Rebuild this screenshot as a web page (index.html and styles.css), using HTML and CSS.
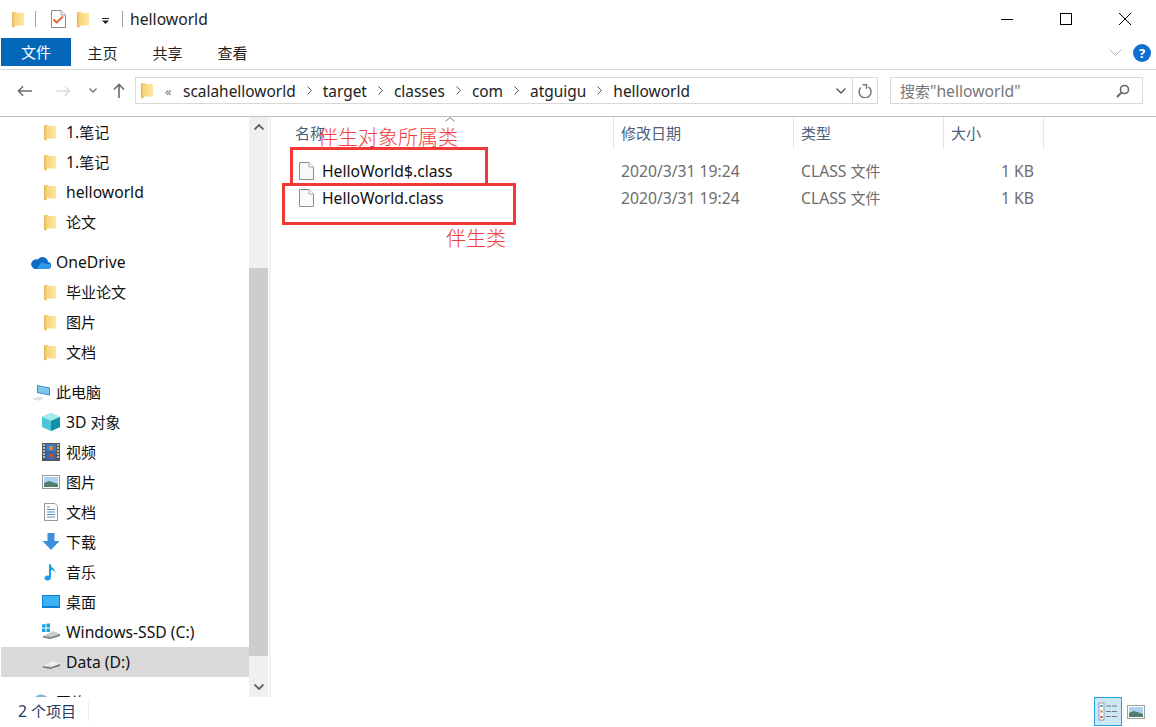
FILE: index.html
```html
<!DOCTYPE html>
<html lang="zh-CN">
<head>
<meta charset="utf-8">
<title>helloworld</title>
<link rel="stylesheet" href="styles.css">
</head>
<body>
<svg class="defs" width="0" height="0" aria-hidden="true">
  <defs>
    <linearGradient id="fg" x1="0" y1="0" x2="1" y2="0">
      <stop offset="0" stop-color="#f6cf6e"/><stop offset="1" stop-color="#ffe6a0"/>
    </linearGradient>
    <symbol id="folder" viewBox="0 0 12 17">
      <path d="M0 1.500L4.500 .5V2H12V14.500H2.500V16.500L0 15.500Z" fill="url(#fg)"/>
      <path d="M0 1.500L1.500 1V16L0 15.500Z" fill="#e4bb5c"/>
      <path d="M2.500 14.500V16.500L1 16V14.500Z" fill="#e0b655"/>
    </symbol>
    <symbol id="file" viewBox="0 0 15 18">
      <path d="M.5.5H10L14.500 5V17.500H.5Z" fill="#f8f9fb" stroke="#8d8d8d"/>
      <path d="M10 .5V5H14.500" fill="#fff" stroke="#a8a8a8"/>
    </symbol>
  </defs>
</svg>
<div class="window">
  <header class="titlebar">
    <svg class="ic-folder qa-1"><use href="#folder"/></svg>
    <span class="qa-sep qa-sep-1"></span>
    <svg class="ic-check" viewBox="0 0 15 18">
      <path d="M.5.5H10L14.500 5V17.500H.5Z" fill="#fff" stroke="#8a8a8a"/>
      <path d="M10 .5V5H14.500" fill="#eee" stroke="#a8a8a8"/>
      <path d="M2.500 9.500L5.500 12.500L12 6.500" fill="none" stroke="#e8602c" stroke-width="1.800"/>
    </svg>
    <svg class="ic-folder qa-2"><use href="#folder"/></svg>
    <svg class="ic-qa-drop" viewBox="0 0 7 6"><path d="M0 0H7V1H0ZM0 2.500H7L3.500 6Z" fill="#222"/></svg>
    <span class="qa-sep qa-sep-2"></span>
    <span class="title-text lat">helloworld</span>
    <div class="win-btns">
      <svg class="win-btn" viewBox="0 0 12 12"><path d="M0 6.500H12" stroke="#000"/></svg>
      <svg class="win-btn" viewBox="0 0 12 12"><rect x=".5" y=".5" width="11" height="11" fill="none" stroke="#000"/></svg>
      <svg class="win-btn" viewBox="0 0 12 12"><path d="M0 0L12 12M12 0L0 12" stroke="#000"/></svg>
    </div>
  </header>

  <nav class="ribbon">
    <span class="tab tab-file">文件</span>
    <span class="tab tab-first">主页</span>
    <span class="tab">共享</span>
    <span class="tab">查看</span>
    <svg class="ribbon-chev" viewBox="0 0 13 7"><path d="M.5.5L6.500 6.500L12.500.5" fill="none" stroke="#b4b4b4"/></svg>
    <span class="help">?</span>
  </nav>

  <div class="addressbar">
    <svg class="nav-ic nav-back" viewBox="0 0 16 12"><path d="M16 6H1.500M6.500 1L1.500 6L6.500 11" fill="none" stroke="#6b6b6b" stroke-width="1.600"/></svg>
    <svg class="nav-ic nav-fwd" viewBox="0 0 16 12"><path d="M0 6H14.500M9.500 1L14.500 6L9.500 11" fill="none" stroke="#dcdcdc" stroke-width="1.600"/></svg>
    <svg class="nav-down" viewBox="0 0 8 5"><path d="M.5.5L4 4L7.500.5" fill="none" stroke="#777" stroke-width="1.400"/></svg>
    <svg class="nav-up" viewBox="0 0 12 15"><path d="M6 15V1.500M1 6.500L6 1.500L11 6.500" fill="none" stroke="#6b6b6b" stroke-width="1.600"/></svg>
    <div class="crumbs">
      <svg class="ic-folder crumb-folder"><use href="#folder"/></svg>
      <span class="crumb-more">«</span>
      <span class="crumb">scalahelloworld</span>
      <svg class="crumb-sep" viewBox="0 0 5 9"><path d="M.5.5L4.500 4.500L.5 8.500" fill="none" stroke="#555"/></svg>
      <span class="crumb">target</span>
      <svg class="crumb-sep" viewBox="0 0 5 9"><path d="M.5.5L4.500 4.500L.5 8.500" fill="none" stroke="#555"/></svg>
      <span class="crumb">classes</span>
      <svg class="crumb-sep" viewBox="0 0 5 9"><path d="M.5.5L4.500 4.500L.5 8.500" fill="none" stroke="#555"/></svg>
      <span class="crumb">com</span>
      <svg class="crumb-sep" viewBox="0 0 5 9"><path d="M.5.5L4.500 4.500L.5 8.500" fill="none" stroke="#555"/></svg>
      <span class="crumb">atguigu</span>
      <svg class="crumb-sep" viewBox="0 0 5 9"><path d="M.5.5L4.500 4.500L.5 8.500" fill="none" stroke="#555"/></svg>
      <span class="crumb">helloworld</span>
      <svg class="crumb-drop" viewBox="0 0 10 6"><path d="M.5.5L5 5L9.500.5" fill="none" stroke="#555" stroke-width="1.300"/></svg>
      <span class="crumb-refresh">
        <svg class="refresh-ic" viewBox="0 0 14 14"><path d="M2.800 3.500A6 6 0 1 0 10.500 2.800M4.500 .8H8.500V4.800" fill="none" stroke="#777" stroke-width="1.500"/></svg>
      </span>
    </div>
    <div class="search">
      <span class="search-text">搜索<span class="lat">"helloworld"</span></span>
      <svg class="search-ic" viewBox="0 0 14 14"><circle cx="8.500" cy="5.500" r="4" fill="none" stroke="#666" stroke-width="1.600"/><path d="M5.500 8.500L1 13" stroke="#666" stroke-width="2"/></svg>
    </div>
  </div>

  <div class="content">
    <aside class="sidebar">
      <ul class="tree">
        <li class="item sub"><svg class="ic-folder"><use href="#folder"/></svg><span><span class="lat">1.</span>笔记</span></li>
        <li class="item sub"><svg class="ic-folder"><use href="#folder"/></svg><span><span class="lat">1.</span>笔记</span></li>
        <li class="item sub"><svg class="ic-folder"><use href="#folder"/></svg><span class="lat">helloworld</span></li>
        <li class="item sub"><svg class="ic-folder"><use href="#folder"/></svg>论文</li>
        <li class="item root gap">
          <svg class="ic-root" viewBox="0 0 20 14"><path d="M3.500 13.500H16.500A3.500 3.500 0 0 0 17 6.500 5.500 5.500 0 0 0 7 4 4.500 4.500 0 0 0 3.500 13.500Z" fill="#0f6cc4"/><path d="M6 13.500H16.500A3.500 3.500 0 0 0 19.500 9L10 7Z" fill="#2e9be6"/></svg><span class="lat">OneDrive</span>
        </li>
        <li class="item sub"><svg class="ic-folder"><use href="#folder"/></svg>毕业论文</li>
        <li class="item sub"><svg class="ic-folder"><use href="#folder"/></svg>图片</li>
        <li class="item sub"><svg class="ic-folder"><use href="#folder"/></svg>文档</li>
        <li class="item root gap">
          <svg class="ic-root" viewBox="0 0 20 17"><path d="M6 1L19 3.500V11.500L6 9Z" fill="#3a8fc8"/><path d="M7 2L18 4.200V10.300L7 8.200Z" fill="#7cc6ea"/><path d="M1 15L7 12.500L14 14L8 16.800Z" fill="#dfe3e6"/></svg>此电脑
        </li>
        <li class="item sub">
          <svg class="ic-sub" viewBox="0 0 18 18"><path d="M9 0L18 4V14L9 18L0 14V4Z" fill="#4cc6d4"/><path d="M9 0L18 4L9 8L0 4Z" fill="#a5ebf0"/><path d="M9 8L18 4V14L9 18Z" fill="#0f8fa8"/></svg><span><span class="lat">3D </span>对象</span>
        </li>
        <li class="item sub">
          <svg class="ic-sub" viewBox="0 0 18 18"><rect width="18" height="18" fill="#555"/><rect x="4" y="1" width="10" height="7.500" fill="#3a7ac8"/><rect x="4" y="9.500" width="10" height="7.500" fill="#3566b5"/><rect x="7" y="3" width="4" height="4" fill="#d08a3a"/><rect x="7" y="11" width="4" height="4" fill="#c0502a"/><path d="M1 2H3M1 5H3M1 8H3M1 11H3M1 14H3M15 2H17M15 5H17M15 8H17M15 11H17M15 14H17" stroke="#ddd" stroke-width="1.500"/></svg>视频
        </li>
        <li class="item sub">
          <svg class="ic-sub" viewBox="0 0 18 18"><rect x=".5" y="2.500" width="17" height="13" fill="#fff" stroke="#999"/><rect x="2" y="4" width="14" height="10" fill="#a9d3ef"/><path d="M2 10L7 8L16 11V14H2Z" fill="#4f7f6e"/></svg>图片
        </li>
        <li class="item sub">
          <svg class="ic-sub" viewBox="0 0 18 18"><path d="M2.500.5H13L15.500 3V17.500H2.500Z" fill="#fff" stroke="#999"/><path d="M5 4H8M5 6.500H13M5 9H13M5 11.500H13M5 14H13" stroke="#5b8fc0"/></svg>文档
        </li>
        <li class="item sub">
          <svg class="ic-sub" viewBox="0 0 18 18"><path d="M5.500 0H12.500V8H17.500L9 17L.5 8H5.500Z" fill="#3f8fdc"/></svg>下载
        </li>
        <li class="item sub">
          <svg class="ic-sub" viewBox="0 0 18 18"><path d="M7 1H8.500C9 5 13.500 5.500 13.500 10C12.500 7.500 10.500 7 9 7V14.500C9 16.500 7.500 17.500 5.500 17.500C3.500 17.500 2.500 16.500 2.500 15C2.500 13.500 4 12.500 5.500 12.500C6 12.500 6.500 12.500 7 12.800Z" fill="#1e9ce8"/></svg>音乐
        </li>
        <li class="item sub">
          <svg class="ic-sub" viewBox="0 0 18 18"><rect y="2" width="18" height="13" fill="#0c80d8"/><rect x="1" y="3" width="16" height="10" fill="#3db2f2"/></svg>桌面
        </li>
        <li class="item sub">
          <svg class="ic-sub" viewBox="0 0 18 18"><path d="M0 1.500L3.500 1V4.500H0ZM4.500 .8L8 .2V4.500H4.500ZM0 5.500H3.500V9H0ZM4.500 5.500H8V9H4.500Z" fill="#19a4e6"/><path d="M1 13L11 8L18 11V13L8 16L1 14.500Z" fill="#c8cccc"/><path d="M1 13L8 14.500L18 11V13L8 16L1 14.500Z" fill="#7d7d7d"/><path d="M5 14H8" stroke="#56b04a"/></svg><span class="lat">Windows-SSD (C:)</span>
        </li>
        <li class="item sub selected">
          <svg class="ic-sub" viewBox="0 0 18 18"><path d="M1 13L11 8L18 11V13L8 16L1 14.500Z" fill="#eef0f0"/><path d="M1 13L8 14.500L18 11V13L8 16L1 14.500Z" fill="#6f6f6f"/><path d="M5 14H8" stroke="#56b04a"/></svg><span class="lat">Data (D:)</span>
        </li>
        <li class="item root gap">
          <svg class="ic-root" viewBox="0 0 20 17"><circle cx="10" cy="8.500" r="8" fill="#7ab6dc"/></svg>网络
        </li>
      </ul>
      <div class="scrollbar">
        <svg class="sb-arrow" viewBox="0 0 10 6"><path d="M.5 5.500L5 1L9.500 5.500" fill="none" stroke="#606060" stroke-width="1.800"/></svg>
        <div class="sb-space sb-space-top"></div>
        <div class="sb-thumb"></div>
        <div class="sb-space sb-space-bottom"></div>
        <svg class="sb-arrow" viewBox="0 0 10 6"><path d="M.5.5L5 5L9.500.5" fill="none" stroke="#606060" stroke-width="1.800"/></svg>
      </div>
    </aside>

    <main class="files">
      <div class="head cols">
        <span class="hcell hname">名称<svg class="sort" viewBox="0 0 10 5"><path d="M.5 4.500L5 .5L9.500 4.500" fill="none" stroke="#777"/></svg></span>
        <span class="hcell">修改日期</span>
        <span class="hcell">类型</span>
        <span class="hcell hlast">大小</span>
      </div>
      <div class="rows">
        <div class="row cols">
          <span class="name"><svg class="ic-file"><use href="#file"/></svg><span class="lat">HelloWorld$.class</span></span>
          <span class="meta lat">2020/3/31 19:24</span>
          <span class="meta"><span class="lat">CLASS </span>文件</span>
          <span class="meta size lat">1 KB</span>
        </div>
        <div class="row cols">
          <span class="name"><svg class="ic-file"><use href="#file"/></svg><span class="lat">HelloWorld.class</span></span>
          <span class="meta lat">2020/3/31 19:24</span>
          <span class="meta"><span class="lat">CLASS </span>文件</span>
          <span class="meta size lat">1 KB</span>
        </div>
      </div>
      <div class="mark mark-1"></div>
      <div class="mark mark-2"></div>
      <span class="note note-1">伴生对象所属类</span>
      <span class="note note-2">伴生类</span>
    </main>
  </div>

  <footer class="status">
    <span class="count"><span class="lat">2 </span>个项目</span>
    <div class="views">
      <span class="view view-on">
        <svg class="view-ic" viewBox="0 0 20 19">
          <rect x="1" y="1" width="5" height="17" fill="#fff" stroke="#9a9a9a"/>
          <rect x="2.500" y="3" width="2" height="2" fill="#3f7fc0"/><rect x="2.500" y="8.500" width="2" height="2" fill="#b7793a"/><rect x="2.500" y="14" width="2" height="2" fill="#c8382a"/>
          <path d="M8 4H13M14 4H19M8 9.500H13M14 9.500H19M8 14.500H13M14 14.500H19" stroke="#777"/>
        </svg>
      </span>
      <svg class="view-thumb" viewBox="0 0 18 14"><rect x=".5" y=".5" width="17" height="13" fill="#fff" stroke="#a0a0a0"/><rect x="2" y="2" width="14" height="10" fill="#a9d3ef"/><path d="M2 8L7 6L16 9V12H2Z" fill="#4f7f6e"/></svg>
    </div>
  </footer>
</div>
</body>
</html>
```
FILE: styles.css
```css
* { box-sizing: border-box; }
html, body { margin: 0; height: 100%; }
body {
  background: #fff;
  color: #111;
  font: 15px/20px "Noto Sans", "Noto Sans CJK SC", sans-serif;
  overflow: hidden;
}
.lat { font-size: 15.7px; white-space: pre; }
.defs { position: absolute; }
.window { display: flex; flex-direction: column; width: 1156px; height: 727px; }
svg { display: block; flex: none; }

/* Title bar */
.titlebar { display: flex; align-items: center; height: 38px; flex: none; }
.ic-folder { width: 12px; height: 17px; }
.qa-1 { margin-left: 12px; }
.qa-sep { width: 1px; height: 16px; background: #a0a0a0; }
.qa-sep-1 { margin-left: 11px; }
.ic-check { width: 15px; height: 18px; margin-left: 15px; }
.qa-2 { margin-left: 11px; }
.ic-qa-drop { width: 7px; height: 6px; margin-left: 13px; margin-top: 3px; }
.qa-sep-2 { margin-left: 13px; }
.title-text { margin-left: 7px; color: #222; }
.win-btns { display: flex; gap: 47px; margin-left: auto; margin-right: 25px; }
.win-btn { width: 12px; height: 12px; }

/* Ribbon */
.ribbon { display: flex; align-items: flex-start; height: 31px; margin-left: 1px; flex: none; }
.tab { display: flex; align-items: center; justify-content: center; width: 65px; height: 28px; color: #222; padding-top: 2px; }
.tab-file { width: 70px; background: #0366b8; color: #fff; padding-top: 0; }
.tab-first { margin-left: -1px; }
.ribbon-chev { width: 13px; height: 7px; margin: 11px 0 0 auto; }
.help {
  display: flex; align-items: center; justify-content: center;
  width: 18px; height: 18px; margin: 6px 5px 0 11px;
  border-radius: 50%; background: #0f6fd0; color: #fff; font-size: 13px; font-weight: 700;
}

/* Address bar */
.addressbar {
  display: flex; align-items: center; height: 48px; flex: none;
  border-top: 1px solid #d9d9d9; border-bottom: 1px solid #bfbfbf;
  padding-top: 7px; padding-bottom: 12px;
}
.nav-ic { width: 15px; height: 12px; }
.nav-back { margin-left: 17px; }
.nav-fwd { margin-left: 24px; }
.nav-down { width: 8px; height: 5px; margin-left: 18px; }
.nav-up { width: 12px; height: 15px; margin-left: 16px; }
.crumbs {
  display: flex; align-items: center; width: 743px; height: 27px; margin-left: 10px;
  border: 1px solid #d9d9d9; padding-left: 5px;
}
.crumb-folder { margin-right: 12px; }
.crumb-more { width: 18px; color: #777; font-size: 13px; }
.crumb { color: #222; font-size: 15.45px; }
.crumb-sep { width: 5px; height: 9px; margin: 0 11px; }
.crumb-drop { width: 10px; height: 6px; margin-left: auto; }
.crumb-refresh { display: flex; align-items: center; justify-content: center; width: 25px; height: 25px; margin-left: 6px; border-left: 1px solid #d9d9d9; }
.refresh-ic { width: 14px; height: 14px; }
.search {
  display: flex; align-items: center; justify-content: space-between;
  width: 253px; height: 27px; margin-left: 12px; padding: 0 12px 0 9px;
  border: 1px solid #d9d9d9; color: #777;
}
.search-ic { width: 14px; height: 14px; }

/* Content */
.content { display: flex; flex: 1; min-height: 0; }
.sidebar { display: flex; width: 271px; flex: none; border-right: 2px solid #f1f1f1; overflow: hidden; }
.tree { list-style: none; width: 248px; margin: 0 0 0 1px; padding: 0; overflow: hidden; }
.item { display: flex; align-items: center; height: 30px; color: #111; }
.sub { padding-left: 43px; }
.sub .ic-folder { margin-right: 10px; }
.root { padding-left: 30px; }
.gap { margin-top: 10px; }
.ic-root { width: 20px; height: 17px; margin-right: 5px; }
.ic-sub { width: 18px; height: 18px; margin: 0 6px 0 -2px; }
.selected { background: #d9d9d9; }
.scrollbar { display: flex; flex-direction: column; align-items: center; width: 19px; margin-right: 1px; background: #f0f0f0; }
.sb-arrow { width: 10px; height: 6px; margin: 7px 0; }
.sb-space-top { height: 131px; }
.sb-thumb { width: 100%; height: 388px; background: #cdcdcd; }
.sb-space-bottom { flex: 1; }

/* File list */
.files { position: relative; flex: 1; }
.cols { display: grid; grid-template-columns: 342px 180px 150px 101px; }
.head { height: 32px; align-items: stretch; }
.hcell { display: flex; align-items: center; padding-left: 7px; border-left: 1px solid #e5e5e5; color: #4c607a; }
.hname { position: relative; padding-left: 24px; border-left: 0; }
.hlast { border-right: 1px solid #e5e5e5; }
.sort { position: absolute; left: 174px; top: 0; width: 10px; height: 5px; }
.rows { padding-top: 8px; }
.row { height: 27px; align-items: center; }
.name { display: flex; align-items: center; padding-left: 28px; color: #111; }
.ic-file { width: 15px; height: 18px; margin-right: 8px; }
.meta { padding-left: 8px; color: #6d6d6d; }
.size { padding: 0 10px 0 0; text-align: right; }

/* Annotations drawn over the list */
.mark { position: absolute; border: 3px solid #f33838; }
.mark-1 { left: 19px; top: 30px; width: 198px; height: 39px; }
.mark-2 { left: 11px; top: 66px; width: 234px; height: 42px; }
.note { position: absolute; font-size: 20px; line-height: 28px; color: #f23c3c; font-weight: 300; }
.note-1 { left: 47px; top: 7px; }
.note-2 { left: 175px; top: 108px; }

/* Status bar */
.status { display: flex; align-items: center; justify-content: space-between; height: 30px; flex: none; padding-left: 18px; }
.count { width: 71px; margin-top: -2px; border-right: 1px solid #f0f0f0; color: #1f3a5f; }
.views { display: flex; align-items: center; gap: 5px; margin-right: 11px; align-self: flex-start; }
.view { display: flex; align-items: center; justify-content: center; width: 28px; height: 29px; }
.view-on { background: #cce8f6; border: 1px solid #26a0da; }
.view-ic { width: 20px; height: 19px; }
.view-thumb { width: 18px; height: 14px; }
```
